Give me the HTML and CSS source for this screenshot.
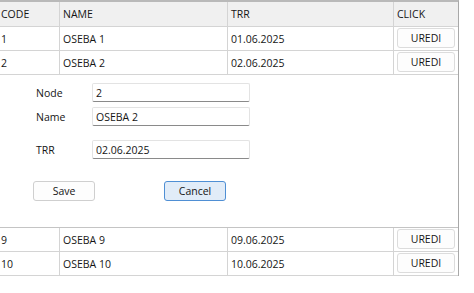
FILE: index.html
```html
<!DOCTYPE html>
<html lang="sl">
<head>
    <meta charset="UTF-8">
    <meta name="viewport" content="width=device-width, initial-scale=1.0">
    <title>Osebe</title>
    <link rel="stylesheet" href="styles.css">
</head>
<body>
    <div class="grid-wrap">
        <div class="row head">
            <div class="cell">CODE</div>
            <div class="cell">NAME</div>
            <div class="cell">TRR</div>
            <div class="cell">CLICK</div>
        </div>
        <div class="row">
            <div class="cell">1</div>
            <div class="cell">OSEBA 1</div>
            <div class="cell">01.06.2025</div>
            <div class="cell btn-cell"><button class="row-btn">UREDI</button></div>
        </div>
        <div class="row">
            <div class="cell">2</div>
            <div class="cell">OSEBA 2</div>
            <div class="cell">02.06.2025</div>
            <div class="cell btn-cell"><button class="row-btn">UREDI</button></div>
        </div>

        <!-- urejanje izbrane vrstice -->
        <div class="edit-panel">
            <form class="edit-form">
                <label>Node</label>
                <input type="text" value="2">
                <label>Name</label>
                <input type="text" value="OSEBA 2">
                <label class="gap">TRR</label>
                <input type="text" class="gap" value="02.06.2025">
            </form>
            <div class="actions">
                <button class="btn">Save</button>
                <button class="btn btn-cancel">Cancel</button>
            </div>
        </div>

        <div class="row">
            <div class="cell">9</div>
            <div class="cell">OSEBA 9</div>
            <div class="cell">09.06.2025</div>
            <div class="cell btn-cell"><button class="row-btn">UREDI</button></div>
        </div>
        <div class="row">
            <div class="cell">10</div>
            <div class="cell">OSEBA 10</div>
            <div class="cell">10.06.2025</div>
            <div class="cell btn-cell"><button class="row-btn">UREDI</button></div>
        </div>
    </div>
</body>
</html>
```
FILE: styles.css
```css
body {
  margin: 0;
  background-color: #fff;
  font-family: "Open Sans", "Noto Sans", sans-serif;
  font-size: 10.5px;
  color: #151515;
}
.grid-wrap {
  width: 460px;
  margin-left: -2px;
  border-top: 2px solid #b9b9b9;
  border-right: 1px solid #a8a8a8;
}
.row {
  display: grid;
  grid-template-columns: 62px 168px 166px 63px;
  height: 24px;
  border-bottom: 1px solid #d4d4d4;
  box-sizing: border-box;
}
.row.head {
  height: 25px;
  background-color: #f0f0f0;
}
.cell {
  display: flex;
  align-items: center;
  padding-left: 3px;
  border-right: 1px solid #d4d4d4;
}
.row .cell:last-child {
  border-right: none;
}
.btn-cell {
  padding: 1px 2px 2px 3px;
}
.row-btn {
  width: 100%;
  height: 20px;
  font-family: inherit;
  font-size: 10.5px;
  color: #151515;
  background-color: #fdfdfd;
  border: 1px solid #dcdcdc;
  border-radius: 3px;
  padding: 0;
}
.edit-panel {
  height: 153px;
  box-sizing: border-box;
  padding: 8px 0 0 38px;
  border-bottom: 1px solid #c4c4c4;
  background-color: #fff;
}
.edit-form {
  display: grid;
  grid-template-columns: 56px 158px;
  row-gap: 5px;
  align-items: center;
}
.edit-form .gap {
  margin-top: 9px;
}
.edit-form input {
  height: 19px;
  box-sizing: border-box;
  padding: 0 3px;
  font-family: inherit;
  font-size: 10.5px;
  color: #151515;
  border: 1px solid #e3e3e3;
  border-bottom-color: #8a8a8a;
  border-radius: 2px;
  outline: none;
}
.actions {
  display: flex;
  gap: 69px;
  margin: 22px 0 0 -3px;
}
.btn {
  width: 62px;
  height: 20px;
  padding: 0;
  font-family: inherit;
  font-size: 10.5px;
  color: #151515;
  background-color: #fdfdfd;
  border: 1px solid #cfcfcf;
  border-radius: 3px;
}
.btn-cancel {
  background-color: #e1ecf8;
  border-color: #4f8fd4;
}
```
